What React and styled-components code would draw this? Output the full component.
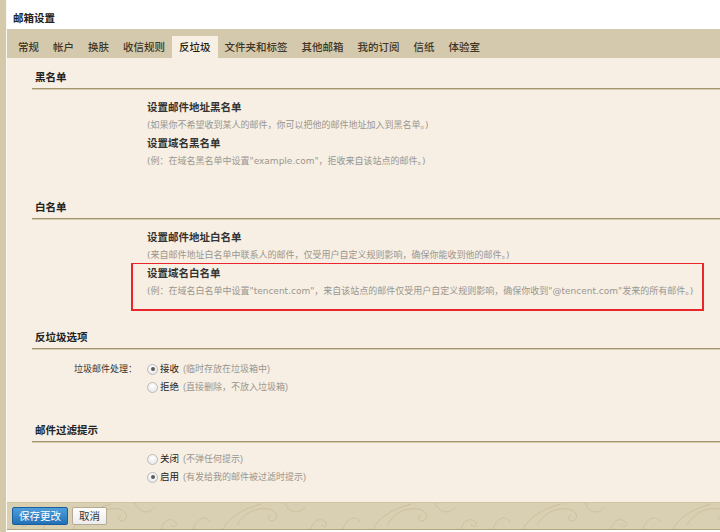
import React from 'react'
import styled, { createGlobalStyle } from 'styled-components'

const GlobalStyle = createGlobalStyle`
  html, body {
    margin: 0;
    padding: 0;
    background: #fff;
  }
  body {
    font-family: "Liberation Sans", "Noto Sans CJK SC", sans-serif;
    font-size: 10.5px;
    color: #333;
  }
`

const Page = styled.div`
  display: flex;
  height: 532px;
  overflow: hidden;
`

const Rail = styled.div`
  width: 6px;
  flex: none;
  background: #d5c9ab;
  border-right: 1px solid #fbf8f1;
`

const Main = styled.div`
  flex: 1;
  min-width: 0;
  display: flex;
  flex-direction: column;
`

const Title = styled.div`
  height: 29px;
  box-sizing: border-box;
  padding: 5px 0 0 6px;
  line-height: 26px;
  font-weight: bold;
  color: #222;
`

const TabBar = styled.div`
  height: 29px;
  display: flex;
  align-items: flex-end;
  padding-left: 4px;
  background: #d5c9ad;
`

const Tab = styled.div`
  height: 22px;
  line-height: 22px;
  padding: 0 7px;
  white-space: nowrap;
  font-weight: 500;
  color: ${p => (p.$active ? '#221c12' : '#3f3625')};
  background: ${p => (p.$active ? '#f7efe3' : 'transparent')};
`

const Content = styled.div`
  flex: 1;
  background: #f7efe3;
  padding: 8px 0 0 25px;
`

const Section = styled.section`
  padding-bottom: ${p => p.$after}px;
`

const Heading = styled.div`
  line-height: 22px;
  padding-left: 3px;
  font-weight: bold;
  color: #222;
  border-bottom: 1px solid #a3966f;
  box-shadow: 0 1px 0 #d6ccb2;
`

const Body = styled.div`
  padding: ${p => p.$top}px 0 0 ${p => p.$indent}px;
`

const ItemTitle = styled.div`
  line-height: 18px;
  font-weight: bold;
  color: #333;
`

const ItemDesc = styled.div`
  line-height: 18px;
  font-family: "DejaVu Sans", "Noto Sans CJK SC", sans-serif;
  font-size: 9px;
  color: #9a9690;
  white-space: nowrap;
`

const Marked = styled.div`
  width: 573px;
  box-sizing: border-box;
  margin: -1px 0 -11px -16px;
  padding: 0 0 9px 14px;
  border: 2px solid #e8262b;
  border-top-width: 1.5px;
`

const Row = styled.div`
  display: grid;
  grid-template-columns: 115px 1fr;
  line-height: 18px;
  font-size: 9px;
`

const RowLabel = styled.div`
  text-align: right;
  padding-right: 10px;
  color: #333;
`

const Option = styled.label`
  display: flex;
  align-items: center;
  white-space: nowrap;
  font-size: 9.5px;
  color: #222;
`

const Radio = styled.span`
  width: 9px;
  height: 9px;
  margin-right: 2px;
  border-radius: 50%;
  border: 1px solid #bcbcbc;
  background: radial-gradient(circle at 50% 35%, #ffffff 0%, #e2e2e2 100%);
  display: inline-flex;
  align-items: center;
  justify-content: center;

  &::after {
    content: '';
    width: 4px;
    height: 4px;
    border-radius: 50%;
    background: ${p => (p.$checked ? '#5a5a5a' : 'transparent')};
  }
`

const Hint = styled.span`
  margin-left: 4px;
  font-size: 9px;
  color: #9a9690;
`

const Footer = styled.div`
  position: relative;
  height: 26px;
  display: flex;
  align-items: center;
  gap: 4px;
  padding-left: 5px;
  background: #d9cfb3;
  border-top: 1px solid #cfc3a3;
  border-bottom: 1px solid #b3a784;
  margin-bottom: 2px;
`

const Swirls = styled.svg`
  position: absolute;
  inset: 0;
  width: 100%;
  height: 100%;
`

const Button = styled.button`
  position: relative;
  height: 18px;
  box-sizing: border-box;
  padding: 0 6px;
  font-family: inherit;
  font-size: 10.5px;
  line-height: 16px;
  border-radius: 2px;
  cursor: pointer;
  color: ${p => (p.$primary ? '#fff' : '#333')};
  border: 1px solid ${p => (p.$primary ? '#1c5e9c' : '#b4ab92')};
  background: ${p =>
    p.$primary
      ? 'linear-gradient(#4f9fdc, #2270b6)'
      : 'linear-gradient(#ffffff, #ececec)'};
`

const tabs = ['常规', '帐户', '换肤', '收信规则', '反垃圾', '文件夹和标签', '其他邮箱', '我的订阅', '信纸', '体验室']

function App() {
  return (
    <Page>
      <GlobalStyle />
      <Rail />
      <Main>
        <Title>邮箱设置</Title>
        <TabBar>
          {tabs.map(t => (
            <Tab key={t} $active={t === '反垃圾'}>{t}</Tab>
          ))}
        </TabBar>
        <Content>
          <Section $after={26}>
            <Heading>黑名单</Heading>
            <Body $top={9} $indent={115}>
              <ItemTitle>设置邮件地址黑名单</ItemTitle>
              <ItemDesc>(如果你不希望收到某人的邮件，你可以把他的邮件地址加入到黑名单。)</ItemDesc>
              <ItemTitle>设置域名黑名单</ItemTitle>
              <ItemDesc>(例：在域名黑名单中设置"example.com"，拒收来自该站点的邮件。)</ItemDesc>
            </Body>
          </Section>

          <Section $after={26}>
            <Heading>白名单</Heading>
            <Body $top={9} $indent={115}>
              <ItemTitle>设置邮件地址白名单</ItemTitle>
              <ItemDesc>(来自邮件地址白名单中联系人的邮件，仅受用户自定义规则影响，确保你能收到他的邮件。)</ItemDesc>
              <Marked>
                <ItemTitle>设置域名白名单</ItemTitle>
                <ItemDesc>(例：在域名白名单中设置"tencent.com"，来自该站点的邮件仅受用户自定义规则影响，确保你收到"@tencent.com"发来的所有邮件。)</ItemDesc>
              </Marked>
            </Body>
          </Section>

          <Section $after={23}>
            <Heading>反垃圾选项</Heading>
            <Body $top={11} $indent={0}>
              <Row>
                <RowLabel>垃圾邮件处理：</RowLabel>
                <Option><Radio $checked />接收<Hint>(临时存放在垃圾箱中)</Hint></Option>
              </Row>
              <Row>
                <RowLabel />
                <Option><Radio />拒绝<Hint>(直接删除，不放入垃圾箱)</Hint></Option>
              </Row>
            </Body>
          </Section>

          <Section $after={0}>
            <Heading>邮件过滤提示</Heading>
            <Body $top={8} $indent={0}>
              <Row>
                <RowLabel />
                <Option><Radio />关闭<Hint>(不弹任何提示)</Hint></Option>
              </Row>
              <Row>
                <RowLabel />
                <Option><Radio $checked />启用<Hint>(有发给我的邮件被过滤时提示)</Hint></Option>
              </Row>
            </Body>
          </Section>
        </Content>
        <Footer>
          <Swirls preserveAspectRatio="none" aria-hidden="true">
            <defs>
              <pattern id="swirl" width="150" height="26" patternUnits="userSpaceOnUse">
                <path
                  d="M4 26 C6 16 16 14 19 20 C21 24 15 25 14 21 M36 26 C40 14 50 12 53 19 M66 26 C72 14 86 6 104 1 M80 22 C86 12 96 4 112 6 C120 8 122 16 116 18 C111 19 110 13 114 12 M128 0 C132 10 142 12 148 4"
                  fill="none"
                  stroke="#cdbf9a"
                  strokeWidth="1"
                />
              </pattern>
            </defs>
            <rect width="100%" height="100%" fill="url(#swirl)" />
          </Swirls>
          <Button $primary>保存更改</Button>
          <Button>取消</Button>
        </Footer>
      </Main>
    </Page>
  )
}

export default App
